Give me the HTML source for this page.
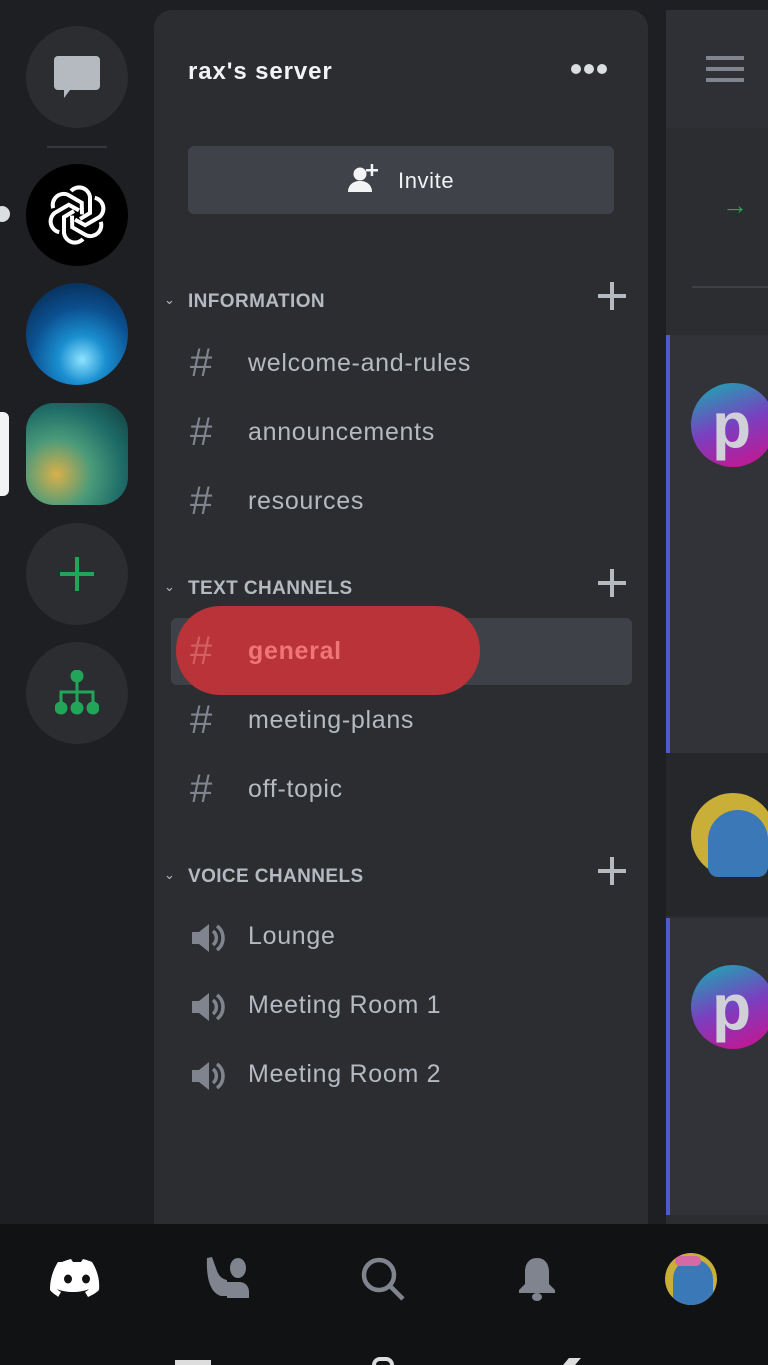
<!DOCTYPE html>
<html><head><meta charset="utf-8"><style>
*{margin:0;padding:0;box-sizing:border-box}
html,body{width:768px;height:1365px;overflow:hidden}
body{background:#1e1f22;position:relative;font-family:"Liberation Sans",sans-serif}
.a{position:absolute}
.circ{position:absolute;left:26px;width:102px;height:102px;border-radius:50%}
.panel{left:154px;top:10px;width:494px;height:1214px;background:#2b2d31;border-radius:18px 18px 0 0}
.cat{position:absolute;left:188px;font-size:19px;font-weight:bold;color:#b5bac1;letter-spacing:.4px}
.chev{position:absolute;left:164px;color:#b5bac1;font-size:13px}
.plus{position:absolute;left:598px;width:28px;height:28px}
.plus:before,.plus:after{content:"";position:absolute;background:#b5bac1}
.plus:before{left:12px;top:0;width:4px;height:28px}
.plus:after{left:0;top:12px;width:28px;height:4px}
.ch{position:absolute;left:190px;font-size:25px;letter-spacing:.7px;color:#b5bac1;height:40px;line-height:40px}
.ch .h{display:inline-block;width:58px;font-size:40px;color:#80848e;font-weight:normal;vertical-align:top;line-height:40px;letter-spacing:0}
.ch span.t{vertical-align:top}
</style></head><body>
<div class="circ" style="top:26px;background:#2b2d31"></div>
<svg class="a" style="left:54px;top:56px" width="46" height="44" viewBox="0 0 46 44"><path d="M4 0h38a4 4 0 0 1 4 4v26a4 4 0 0 1-4 4H16l-6 8v-8H4a4 4 0 0 1-4-4V4a4 4 0 0 1 4-4z" fill="#b5bac1"/></svg>
<div class="a" style="left:47px;top:146px;width:60px;height:2px;background:#35373c"></div>
<div class="a" style="left:-6px;top:206px;width:16px;height:16px;border-radius:50%;background:#dbdee1"></div>
<div class="circ" style="top:164px;background:#000"></div>
<svg class="a" style="left:44px;top:182px" width="66" height="66" viewBox="0 0 66 66" fill="none" stroke="#fff" stroke-width="4"><g transform="translate(33 33)"><g id="p"><path d="M-6-24a11 11 0 0 1 19 6v16l-10 6"/></g><use href="#p" transform="rotate(60)"/><use href="#p" transform="rotate(120)"/><use href="#p" transform="rotate(180)"/><use href="#p" transform="rotate(240)"/><use href="#p" transform="rotate(300)"/></g></svg>
<div class="circ" style="top:283px;background:radial-gradient(circle at 55% 75%,#8fe3ff 0,#1a8fd0 25%,#0b4f8f 55%,#061e3c 100%)"></div>
<div class="a" style="left:0;top:412px;width:9px;height:84px;border-radius:0 6px 6px 0;background:#f2f3f5"></div>
<div class="a" style="left:26px;top:403px;width:102px;height:102px;border-radius:28px;background:radial-gradient(circle at 30% 70%,#d9b04a 0,#4a9a7a 35%,#1e6d68 65%,#123c3c 100%)"></div>
<div class="circ" style="top:523px;background:#2b2d31"></div>
<div class="a" style="left:60px;top:572px;width:34px;height:4px;background:#23a559"></div>
<div class="a" style="left:75px;top:557px;width:4px;height:34px;background:#23a559"></div>
<div class="circ" style="top:642px;background:#2b2d31"></div>
<svg class="a" style="left:55px;top:670px" width="44" height="46" viewBox="0 0 44 46" fill="#23a559" stroke="#23a559" stroke-width="3"><circle cx="22" cy="6" r="5"/><circle cx="6" cy="38" r="5"/><circle cx="22" cy="38" r="5"/><circle cx="38" cy="38" r="5"/><path d="M22 6v32M6 38V22h32v16" fill="none"/></svg>

<div class="a panel"></div>
<div class="a" style="left:188px;top:58px;font-size:24px;letter-spacing:.9px;font-weight:bold;color:#f2f3f5">rax's server</div>
<div class="a" style="left:571px;top:64px;width:36px;height:12px">
<span class="a" style="left:0;width:10px;height:10px;border-radius:50%;background:#dbdee1"></span>
<span class="a" style="left:13px;width:10px;height:10px;border-radius:50%;background:#dbdee1"></span>
<span class="a" style="left:26px;width:10px;height:10px;border-radius:50%;background:#dbdee1"></span></div>
<div class="a" style="left:188px;top:146px;width:426px;height:68px;background:#404249;border-radius:6px"></div>
<svg class="a" style="left:347px;top:164px" width="36" height="30" viewBox="0 0 36 30" fill="#f2f3f5"><circle cx="13" cy="10" r="6.5"/><path d="M1 28c0-7 5-11 12-11s12 4 12 11z"/><rect x="19" y="5" width="12" height="2.5"/><rect x="23.7" y="0" width="2.5" height="12"/></svg>
<div class="a" style="left:398px;top:168px;font-size:22px;letter-spacing:.6px;color:#f2f3f5">Invite</div>

<div class="chev" style="top:292px">⌄</div><div class="cat" style="top:291px">INFORMATION</div><div class="plus" style="top:282px"></div>
<div class="ch" style="top:343px"><span class="h">#</span><span class="t">welcome-and-rules</span></div>
<div class="ch" style="top:412px"><span class="h">#</span><span class="t">announcements</span></div>
<div class="ch" style="top:481px"><span class="h">#</span><span class="t">resources</span></div>

<div class="chev" style="top:579px">⌄</div><div class="cat" style="top:578px">TEXT CHANNELS</div><div class="plus" style="top:569px"></div>
<div class="a" style="left:171px;top:618px;width:461px;height:67px;background:#3f4148;border-radius:6px"></div>
<div class="a" style="left:176px;top:606px;width:304px;height:89px;background:#b93338;border-radius:44px"></div>
<div class="ch" style="top:631px;color:#f07676;font-weight:bold"><span class="h" style="color:#d26060">#</span><span class="t">general</span></div>
<div class="ch" style="top:700px"><span class="h">#</span><span class="t">meeting-plans</span></div>
<div class="ch" style="top:769px"><span class="h">#</span><span class="t">off-topic</span></div>

<div class="chev" style="top:867px">⌄</div><div class="cat" style="top:866px">VOICE CHANNELS</div><div class="plus" style="top:857px"></div>
<svg class="a" style="left:190px;top:922px" width="36" height="32" viewBox="0 0 36 32" fill="#80848e"><path d="M2 10h7l10-8v28l-10-8H2z"/><path d="M23 9a9 9 0 0 1 0 14M27 4a15 15 0 0 1 0 24" stroke="#80848e" stroke-width="3.5" fill="none"/></svg>
<div class="ch" style="top:916px;left:248px">Lounge</div>
<svg class="a" style="left:190px;top:991px" width="36" height="32" viewBox="0 0 36 32" fill="#80848e"><path d="M2 10h7l10-8v28l-10-8H2z"/><path d="M23 9a9 9 0 0 1 0 14M27 4a15 15 0 0 1 0 24" stroke="#80848e" stroke-width="3.5" fill="none"/></svg>
<div class="ch" style="top:985px;left:248px">Meeting Room 1</div>
<svg class="a" style="left:190px;top:1060px" width="36" height="32" viewBox="0 0 36 32" fill="#80848e"><path d="M2 10h7l10-8v28l-10-8H2z"/><path d="M23 9a9 9 0 0 1 0 14M27 4a15 15 0 0 1 0 24" stroke="#80848e" stroke-width="3.5" fill="none"/></svg>
<div class="ch" style="top:1054px;left:248px">Meeting Room 2</div>

<div class="a" style="left:666px;top:10px;width:102px;height:1214px;background:#2b2d31"></div>
<div class="a" style="left:666px;top:10px;width:102px;height:118px;background:#2e3035"></div>
<div class="a" style="left:706px;top:56px;width:38px;height:4px;background:#80848e"></div>
<div class="a" style="left:706px;top:67px;width:38px;height:4px;background:#80848e"></div>
<div class="a" style="left:706px;top:78px;width:38px;height:4px;background:#80848e"></div>
<div class="a" style="left:722px;top:190px;color:#23a559;font-size:26px">→</div>
<div class="a" style="left:692px;top:286px;width:76px;height:2px;background:#3f4147"></div>
<div class="a" style="left:666px;top:335px;width:4px;height:418px;background:#4e5acb"></div>
<div class="a" style="left:670px;top:335px;width:98px;height:418px;background:#313338"></div>
<div class="a" style="left:666px;top:753px;width:102px;height:163px;background:#26272b"></div>
<div class="a" style="left:666px;top:918px;width:4px;height:297px;background:#4e5acb"></div>
<div class="a" style="left:670px;top:918px;width:98px;height:297px;background:#313338"></div>
<div class="a" style="left:691px;top:383px;width:84px;height:84px;border-radius:50%;background:linear-gradient(160deg,#14b0b0,#7a3fc0 50%,#d0108a)"></div>
<div class="a" style="left:712px;top:395px;color:#d0d0d8;font-size:64px;font-weight:bold;line-height:60px">p</div>
<div class="a" style="left:691px;top:793px;width:84px;height:84px;border-radius:50%;background:#c9ae37"></div>
<div class="a" style="left:708px;top:810px;width:60px;height:67px;border-radius:30px 30px 10px 10px;background:#3a78b8"></div>
<div class="a" style="left:691px;top:965px;width:84px;height:84px;border-radius:50%;background:linear-gradient(160deg,#14b0b0,#7a3fc0 50%,#d0108a)"></div>
<div class="a" style="left:712px;top:977px;color:#d0d0d8;font-size:64px;font-weight:bold;line-height:60px">p</div>

<div class="a" style="left:0;top:1224px;width:768px;height:141px;background:#111214"></div>
<svg class="a" style="left:50px;top:1259px" width="54" height="40" viewBox="0 0 54 40"><path d="M12 3C17 1 21 0 21 0l2 3h8l2-3s4 1 9 3c5 8 8 17 7 28-4 4-9 6-11 7l-3-5c2-1 3-2 4-3-9 4-23 4-32 0 1 1 2 2 4 3l-3 5C8 37 3 35 0 31 0 20 3 11 8 3z" fill="#fff"/><ellipse cx="18" cy="20" rx="4" ry="4.5" fill="#111214"/><ellipse cx="36" cy="20" rx="4" ry="4.5" fill="#111214"/></svg>
<svg class="a" style="left:203px;top:1256px" width="48" height="42" viewBox="0 0 48 42" fill="#80848e"><path d="M4 2l5-1 5 14c2 5 5 8 10 9v16h-6C8 37 3 24 4 2z"/><ellipse cx="35" cy="12" rx="8" ry="10"/><path d="M24 26h12c6 0 10 4 10 10v6H24z"/></svg>
<svg class="a" style="left:360px;top:1256px" width="46" height="46" viewBox="0 0 46 46" fill="none" stroke="#80848e" stroke-width="4.5"><circle cx="19" cy="19" r="15"/><path d="M30 30l13 13"/></svg>
<svg class="a" style="left:516px;top:1256px" width="42" height="46" viewBox="0 0 42 46" fill="#80848e"><path d="M21 2c8 0 12 6 12 14v12l6 6v3H3v-3l6-6V16C9 8 13 2 21 2z"/><ellipse cx="21" cy="41" rx="5" ry="4"/></svg>
<div class="a" style="left:665px;top:1253px;width:52px;height:52px;border-radius:50%;background:#c9ae37;overflow:hidden"><div class="a" style="left:8px;top:6px;width:40px;height:50px;border-radius:20px 20px 6px 6px;background:#3a78b8"></div><div class="a" style="left:10px;top:3px;width:26px;height:10px;border-radius:8px;background:#d66aa6"></div></div>
<div class="a" style="left:175px;top:1360px;width:36px;height:5px;background:#ddd"></div>
<div class="a" style="left:372px;top:1357px;width:22px;height:8px;border:4px solid #ddd;border-bottom:none;border-radius:11px 11px 0 0"></div>
<div class="a" style="left:566px;top:1358px;width:12px;height:7px;background:#ddd;transform:skewX(-40deg)"></div>
</body></html>
